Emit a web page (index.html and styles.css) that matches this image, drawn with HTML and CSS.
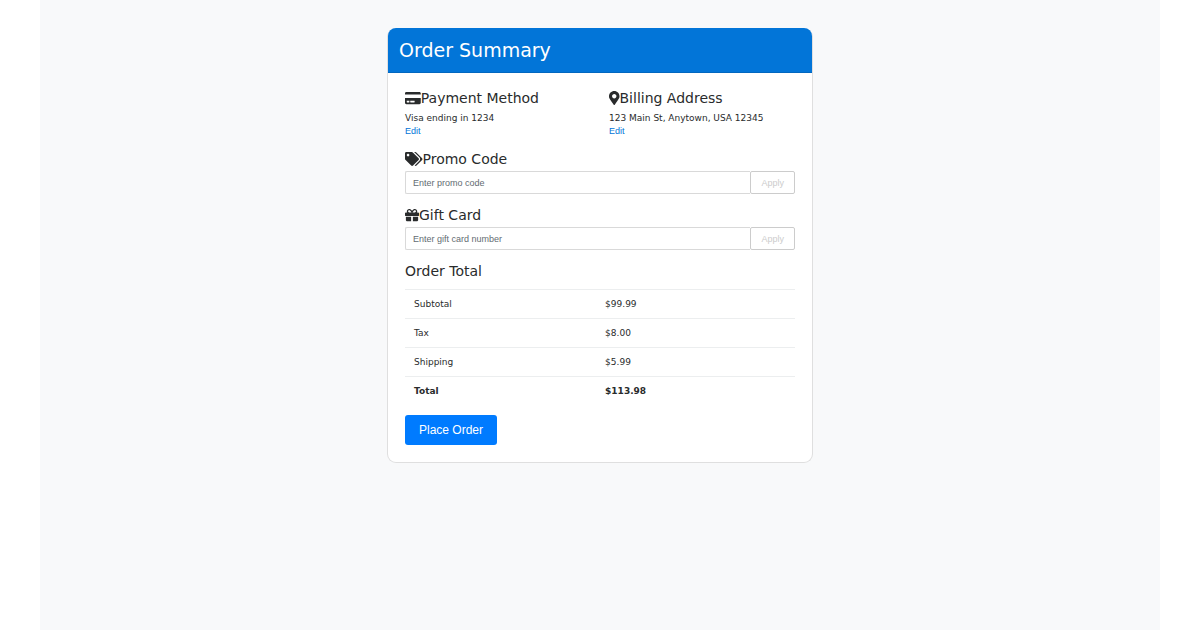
FILE: index.html
```
<!DOCTYPE html>
<html lang="en">
<head>
  <meta charset="UTF-8" />
  <meta name="viewport" content="width=device-width, initial-scale=1" />
  <title>Order Summary</title>
  <link rel="stylesheet" href="styles.css">
</head>
<body>

  <main class="page">
    <div class="card">
      <div class="card-header">
        <h1>Order Summary</h1>
      </div>

      <div class="card-body">
        <div class="row">
          <section>
            <h2><svg class="icon" viewBox="0 0 576 512" aria-hidden="true"><path d="M0 432c0 26.500 21.500 48 48 48h480c26.500 0 48-21.500 48-48V256H0v176zm192-68c0-6.600 5.400-12 12-12h136c6.600 0 12 5.400 12 12v40c0 6.600-5.400 12-12 12H204c-6.600 0-12-5.400-12-12v-40zm-128 0c0-6.600 5.400-12 12-12h72c6.600 0 12 5.400 12 12v40c0 6.600-5.400 12-12 12H76c-6.600 0-12-5.400-12-12v-40zM576 80v48H0V80c0-26.500 21.500-48 48-48h480c26.500 0 48 21.500 48 48z"/></svg>Payment Method</h2>
            <p>Visa ending in 1234</p>
            <a class="edit" href="#">Edit</a>
          </section>
          <section>
            <h2><svg class="icon" viewBox="0 0 384 512" aria-hidden="true"><path d="M172.268 501.67C26.970 291.031 0 269.413 0 192 0 85.961 85.961 0 192 0s192 85.961 192 192c0 77.413-26.970 99.031-172.268 309.670-9.535 13.774-29.930 13.773-39.464 0zM192 272c44.183 0 80-35.817 80-80s-35.817-80-80-80-80 35.817-80 80 35.817 80 80 80z"/></svg>Billing Address</h2>
            <p>123 Main St, Anytown, USA 12345</p>
            <a class="edit" href="#">Edit</a>
          </section>
        </div>

        <form class="code-form">
          <h2><svg class="icon" viewBox="0 0 640 512" aria-hidden="true"><path d="M497.941 225.941L286.059 14.059A48 48 0 0 0 252.118 0H48C21.490 0 0 21.490 0 48v204.118a48 48 0 0 0 14.059 33.941l211.882 211.882c18.744 18.745 49.136 18.746 67.882 0l204.118-204.118c18.745-18.745 18.745-49.137 0-67.882zM112 160c-26.510 0-48-21.490-48-48s21.490-48 48-48 48 21.490 48 48-21.490 48-48 48zm513.941 133.823L421.823 497.941c-18.745 18.745-49.137 18.745-67.882 0l-.36-.36L527.640 323.522c16.999-16.999 26.362-39.600 26.362-63.640s-9.362-46.641-26.362-63.640L331.397 0h48.721a48 48 0 0 1 33.941 14.059l211.882 211.882c18.745 18.745 18.745 49.137 0 67.882z"/></svg><label for="promo">Promo Code</label></h2>
          <div class="input-group">
            <input type="text" id="promo" placeholder="Enter promo code">
            <button type="button" disabled>Apply</button>
          </div>
        </form>

        <form class="code-form">
          <h2><svg class="icon" viewBox="0 0 512 512" aria-hidden="true"><path d="M32 448c0 17.700 14.300 32 32 32h160V320H32v128zm256 32h160c17.700 0 32-14.300 32-32V320H288v160zm192-320h-42.100c6.200-12.100 10.100-25.500 10.100-40 0-48.500-39.500-88-88-88-41.600 0-68.500 21.300-103 68.300-34.500-47-61.400-68.300-103-68.300-48.500 0-88 39.500-88 88 0 14.500 3.800 27.900 10.100 40H32c-17.700 0-32 14.300-32 32v80c0 8.800 7.200 16 16 16h480c8.800 0 16-7.200 16-16v-80c0-17.700-14.300-32-32-32zm-326.100 0c-22.100 0-40-17.900-40-40s17.900-40 40-40c19.900 0 34.600 3.300 86.100 80h-86.100zm206.100 0h-86.100c51.400-76.500 65.700-80 86.100-80 22.100 0 40 17.900 40 40s-17.900 40-40 40z"/></svg><label for="gift">Gift Card</label></h2>
          <div class="input-group">
            <input type="text" id="gift" placeholder="Enter gift card number">
            <button type="button" disabled>Apply</button>
          </div>
        </form>

        <h2>Order Total</h2>
        <table class="totals">
          <tbody>
            <tr><td>Subtotal</td><td>$99.99</td></tr>
            <tr><td>Tax</td><td>$8.00</td></tr>
            <tr><td>Shipping</td><td>$5.99</td></tr>
            <tr class="total"><td>Total</td><td>$113.98</td></tr>
          </tbody>
        </table>

        <button type="button" class="place-order">Place Order</button>
      </div>
    </div>
  </main>

</body>
</html>
```
FILE: styles.css
```
* {
  box-sizing: border-box;
}
body {
  margin: 0;
  background: #fff;
  color: #292b2c;
  font-family: "DejaVu Sans", sans-serif;
  font-size: 9px;
  line-height: 14px;
}
.page {
  min-height: 100vh;
  margin: 0 40px;
  padding: 28px 16px;
  background: #f8f9fa;
}
.card {
  max-width: 426px;
  margin: 0 auto;
  background: #fff;
  border: 1px solid #dfdfdf;
  border-top: 0;
  border-radius: 9px;
}
.card-header {
  padding: 11px 11px 10px;
  background: #0275d8;
  border-bottom: 1px solid #0267bf;
  border-radius: 8px 8px 0 0;
  color: #fff;
}
h1,
h2,
p {
  margin: 0;
  font-weight: 400;
}
h1 {
  font-size: 19px;
  line-height: 23px;
}
h2 {
  display: flex;
  align-items: center;
  margin-bottom: 4px;
  font-size: 14px;
  line-height: 16px;
}
.icon {
  height: 14px;
  fill: currentColor;
}
.card-body {
  padding: 17px;
}
.row {
  display: grid;
  grid-template-columns: 1fr 1fr;
  gap: 18px;
  margin-bottom: 14px;
}
.row p {
  margin-top: 5px;
}
.row h2 {
  margin-bottom: 0;
}
.edit {
  display: block;
  width: max-content;
  color: #0275d8;
  font: 9px/12px "Liberation Sans", sans-serif;
  text-decoration: none;
}
.code-form {
  margin-bottom: 13px;
}
.input-group {
  display: flex;
}
.input-group input,
.input-group button {
  height: 23px;
  border: 1px solid #d9d9d9;
  background: #fff;
  font: 9px/14px "Liberation Sans", sans-serif;
}
.input-group input {
  flex: 1;
  min-width: 0;
  padding: 0 7px;
  border-right: 0;
  border-radius: 2px 0 0 2px;
}
.input-group input::placeholder {
  color: #636c72;
}
.input-group button {
  padding: 0 10px;
  border-color: #ccc;
  border-radius: 2px;
  color: #ccc;
}
.totals {
  width: 100%;
  margin: 10px 0;
  border-collapse: collapse;
}
.totals td {
  padding: 7px 9px;
  border-top: 1px solid #eceeef;
}
.totals td:first-child {
  width: 49%;
}
.total {
  font-weight: 700;
}
.place-order {
  height: 30px;
  padding: 0 14px;
  border: 0;
  border-radius: 3px;
  background: #007bff;
  color: #fff;
  font: 12px/18px "Liberation Sans", sans-serif;
}
```
